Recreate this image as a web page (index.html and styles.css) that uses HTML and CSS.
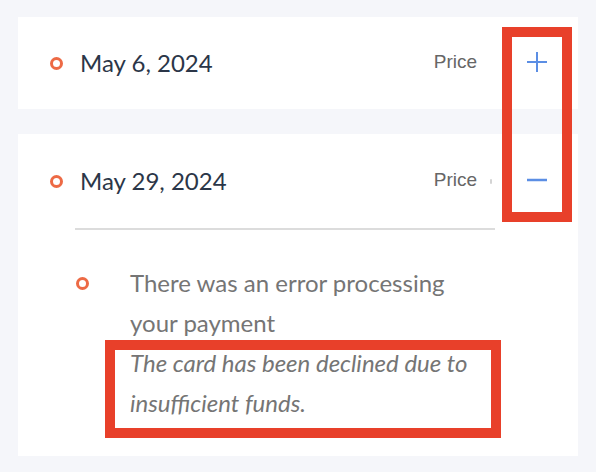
FILE: index.html
```html
<!DOCTYPE html>
<html lang="en">
<head>
<meta charset="utf-8">
<title>Payments</title>
<link rel="stylesheet" href="styles.css">
</head>
<body>
<div class="page">
  <div class="card">
    <div class="row">
      <span class="ring"></span>
      <span class="date">May 6, 2024</span>
      <span class="price">Price</span>
      <span class="toggle">
        <svg width="22" height="22" viewBox="0 0 22 22"><path d="M11 1v20M1 11h20" stroke="#5b8ee4" stroke-width="2" fill="none"/></svg>
      </span>
    </div>
  </div>
  <div class="card">
    <div class="row">
      <span class="ring"></span>
      <span class="date">May 29, 2024</span>
      <span class="price">Price</span>
      <span class="tail"></span>
      <span class="toggle toggle-near">
        <svg width="22" height="22" viewBox="0 0 22 22"><path d="M1 11h20" stroke="#5b8ee4" stroke-width="2.5" fill="none"/></svg>
      </span>
    </div>
    <div class="divider"></div>
    <div class="detail">
      <span class="ring ring-small"></span>
      <div class="message">
        <p class="error">There was an error processing your payment</p>
        <p class="reason">The card has been declined due to insufficient funds.</p>
      </div>
    </div>
  </div>
  <div class="mark mark-toggle"></div>
  <div class="mark mark-reason"></div>
</div>
</body>
</html>
```

FILE: styles.css
```css
html, body {
  margin: 0;
  padding: 0;
  background: #f5f6fa;
}
.page {
  position: relative;
  width: 596px;
  height: 472px;
  padding: 17px 18px 0 18px;
  box-sizing: border-box;
  display: flex;
  flex-direction: column;
  gap: 25px;
  font-family: Lato, "Open Sans", sans-serif;
}
.card {
  background: #ffffff;
  width: 560px;
}
.row {
  height: 92px;
  display: flex;
  align-items: center;
  padding-left: 32px;
}
.card + .card .row {
  height: 94px;
}
.ring {
  width: 13px;
  height: 13px;
  box-sizing: border-box;
  border: 3px solid #ed6a45;
  border-radius: 50%;
  flex: none;
}
.date {
  margin-left: 17px;
  flex: 1;
  font-size: 24px;
  color: #2b3648;
  line-height: 1;
}
.price {
  font-family: "Liberation Sans", Arial, sans-serif;
  font-size: 19px;
  color: #666666;
  margin-top: -3px;
}
.tail {
  width: 2px;
  height: 5px;
  background: #d4d4d4;
  margin-left: 13px;
  border-radius: 1px;
}
.toggle {
  width: 22px;
  height: 22px;
  margin-left: 49px;
  margin-right: 30px;
  display: flex;
  margin-top: -3px;
}
.toggle-near {
  margin-left: 34px;
}
.divider {
  margin-left: 57px;
  width: 420px;
  height: 2px;
  background: #dcdcdc;
}
.detail {
  display: flex;
  align-items: flex-start;
  padding: 33px 0 33px 58px;
}
.ring-small {
  margin-top: 14px;
}
.message {
  margin-left: 41px;
  width: 345px;
}
.message p {
  margin: 0;
  font-size: 24px;
  line-height: 40px;
  color: #757575;
}
.message .reason {
  font-style: italic;
}
.mark {
  position: absolute;
  border: 10px solid #e8402a;
  box-sizing: border-box;
}
.mark-toggle {
  left: 502px;
  top: 27px;
  width: 70px;
  height: 195px;
}
.mark-reason {
  left: 105px;
  top: 340px;
  width: 396px;
  height: 98px;
}
```
